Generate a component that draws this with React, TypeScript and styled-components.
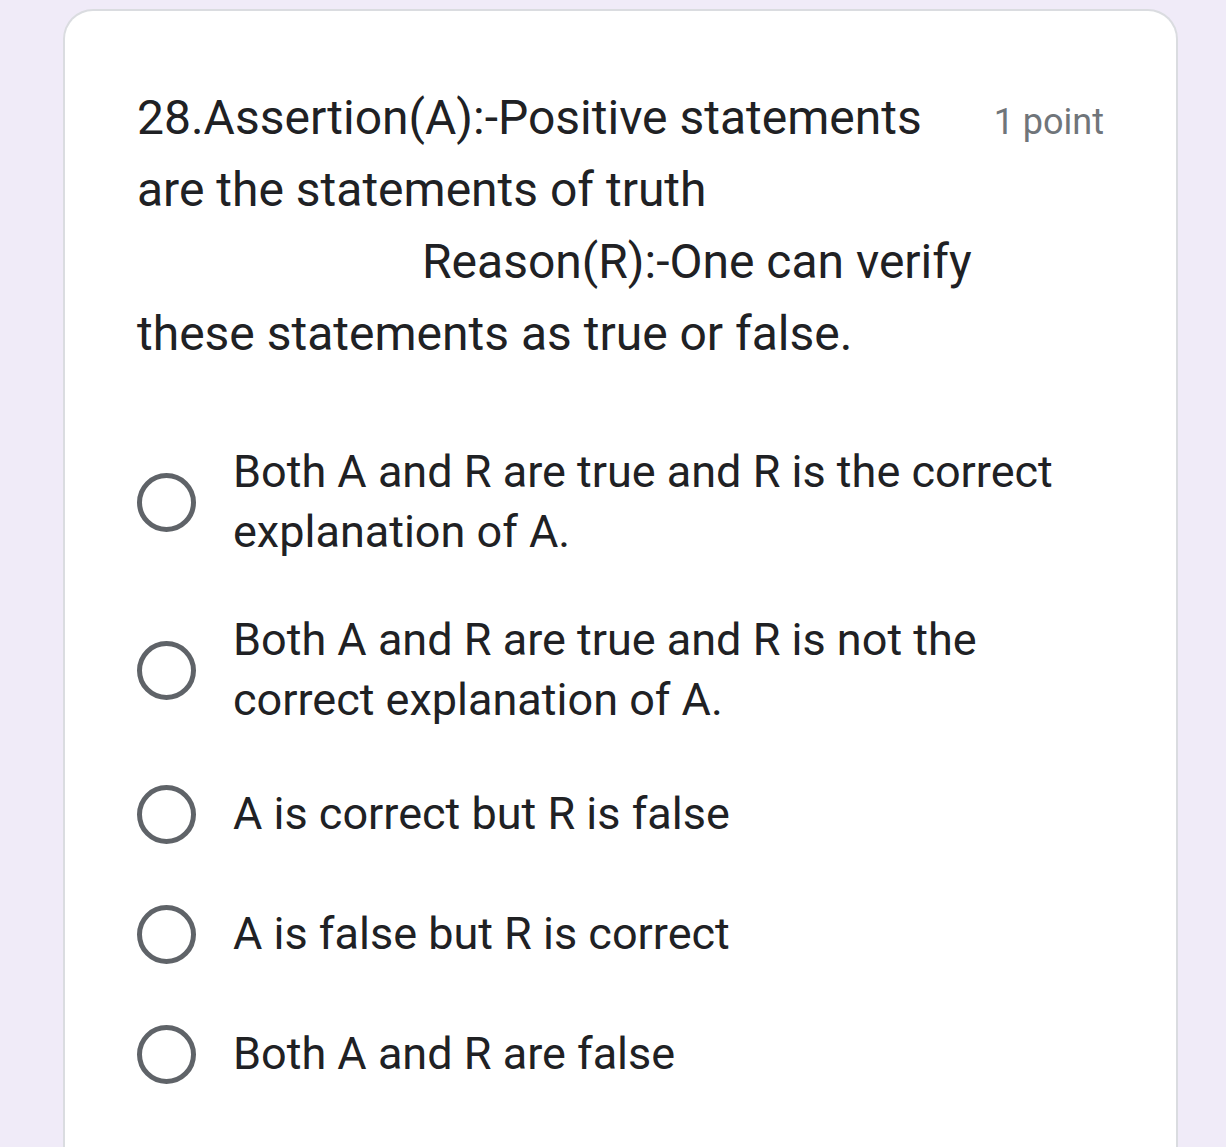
import styled, { createGlobalStyle } from 'styled-components'

const GlobalStyle = createGlobalStyle`
    html, body {
        margin: 0;
        padding: 0;
        background: #f0ebf8;
    }

    body {
        font-family: Roboto, 'Noto Sans', Arial, sans-serif;
        color: #202124;
        overflow: hidden;
    }
`

const Page = styled.div`
    padding: 9px 48px 0 63px;
`

const Card = styled.div`
    background: #ffffff;
    border: 2px solid #dadce0;
    border-bottom: none;
    border-radius: 30px 30px 0 0;
    padding: 71px 72px 80px 72px;
`

const Header = styled.div`
    display: flex;
    align-items: baseline;
    justify-content: space-between;
`

const Title = styled.div`
    flex: 1;
    min-width: 0;
    font-size: 48px;
    line-height: 72px;
    white-space: nowrap;
`

const Indent = styled.span`
    display: inline-block;
    margin-left: 285px;
`

const Points = styled.span`
    flex-shrink: 0;
    margin-left: 60px;
    font-size: 36px;
    color: #70757a;
`

const Options = styled.div`
    display: flex;
    flex-direction: column;
    gap: 48px;
    margin-top: 72px;
`

const Option = styled.label`
    display: flex;
    align-items: center;
    gap: 37px;
    min-height: 72px;
    cursor: pointer;
`

const Radio = styled.span`
    flex-shrink: 0;
    box-sizing: border-box;
    width: 59px;
    height: 59px;
    border: 5px solid #5f6368;
    border-radius: 50%;
`

const OptionText = styled.span`
    font-size: 45px;
    line-height: 60px;
    color: #202124;
`

const choices = [
    'Both A and R are true and R is the correct explanation of A.',
    'Both A and R are true and R is not the correct explanation of A.',
    'A is correct but R is false',
    'A is false but R is correct',
    'Both A and R are false',
]

export default function App() {
    return (
        <>
            <GlobalStyle />
            <Page>
                <Card>
                    <Header>
                        <Title>
                            28.Assertion(A):-Positive statements
                            <br />
                            are the statements of truth
                            <br />
                            <Indent>Reason(R):-One can verify</Indent>
                            <br />
                            these statements as true or false.
                        </Title>
                        <Points>1 point</Points>
                    </Header>

                    <Options>
                        {choices.map((c) => (
                            <Option key={c}>
                                <Radio />
                                <OptionText>{c}</OptionText>
                            </Option>
                        ))}
                    </Options>
                </Card>
            </Page>
        </>
    )
}
